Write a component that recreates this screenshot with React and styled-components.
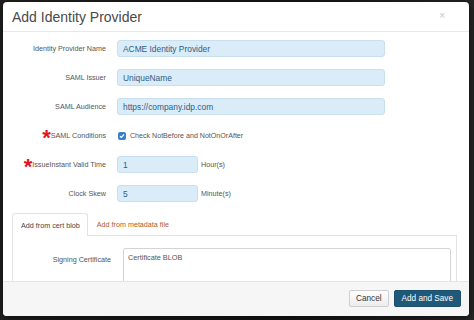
import React from "react";
import styled, { createGlobalStyle } from "styled-components";

const GlobalStyle = createGlobalStyle`
  html, body {
    margin: 0;
    padding: 0;
    background: #1c1c1c;
    font-family: "Liberation Sans", Arial, sans-serif;
  }
`;

function App() {
  return (
    <Page>
      <GlobalStyle />
      <Modal>
        <Header>
          <Title>Add Identity Provider</Title>
          <Close>×</Close>
        </Header>
        <Body>
          <Row>
            <Label>Identity Provider Name</Label>
            <Input defaultValue="ACME Identity Provider" />
          </Row>
          <Row>
            <Label>SAML Issuer</Label>
            <Input defaultValue="UniqueName" />
          </Row>
          <Row>
            <Label>SAML Audience</Label>
            <Input defaultValue="https://company.idp.com" />
          </Row>
          <Row>
            <Label>
              <Star>*</Star>SAML Conditions
            </Label>
            <CheckLine>
              <Checkbox>
                <svg width="6" height="6" viewBox="0 0 6 6">
                  <path d="M1 3.2 L2.4 4.5 L5 1.4" fill="none" stroke="#fff" strokeWidth="1.2" />
                </svg>
              </Checkbox>
              Check NotBefore and NotOnOrAfter
            </CheckLine>
          </Row>
          <Row>
            <Label>
              <Star>*</Star>IssueInstant Valid Time
            </Label>
            <Unit>
              <Input short defaultValue="1" />
              <UnitText>Hour(s)</UnitText>
            </Unit>
          </Row>
          <Row>
            <Label>Clock Skew</Label>
            <Unit>
              <Input short defaultValue="5" />
              <UnitText>Minute(s)</UnitText>
            </Unit>
          </Row>

          <Tabs>
            <Tab active>Add from cert blob</Tab>
            <Tab>Add from metadata file</Tab>
          </Tabs>
          <Pane>
            <PaneRow>
              <PaneLabel>Signing Certificate</PaneLabel>
              <TextArea defaultValue="Certificate BLOB" />
            </PaneRow>
          </Pane>
        </Body>
        <Footer>
          <Button>Cancel</Button>
          <Button primary>Add and Save</Button>
        </Footer>
      </Modal>
    </Page>
  );
}

const Page = styled.div`
  width: 474px;
  height: 320px;
  box-sizing: border-box;
  padding: 2px 5px 4px 3px;
  background: linear-gradient(90deg, #202020, #161616 60%, #262626);
`;
const Modal = styled.div`
  height: 100%;
  background: #fff;
  border-radius: 4px;
  display: flex;
  flex-direction: column;
  overflow: hidden;
  box-shadow: 0 2px 8px rgba(0, 0, 0, 0.6);
`;
const Header = styled.div`
  height: 29px;
  flex: none;
  border-bottom: 1px solid #e8e8e8;
  display: flex;
  align-items: center;
  justify-content: space-between;
  padding: 0 24px 0 9px;
`;
const Title = styled.h4`
  margin: 0;
  font-size: 14px;
  font-weight: normal;
  color: #4a4a4a;
`;
const Close = styled.span`
  font-size: 10px;
  color: #c4c4c4;
  margin-top: -2px;
`;
const Body = styled.div`
  flex: 1;
  overflow: hidden;
  padding-top: 8px;
  display: flex;
  flex-direction: column;
  gap: 12px;
`;
const Row = styled.div`
  display: grid;
  grid-template-columns: 103px auto;
  column-gap: 11px;
  align-items: center;
  min-height: 17px;
`;
const Label = styled.label`
  text-align: right;
  font-size: 7.2px;
  color: #555;
  white-space: nowrap;
`;
const Star = styled.span`
  color: #e3141b;
  font-size: 22px;
  font-weight: bold;
  line-height: 0;
  vertical-align: -7px;
`;
const Input = styled.input`
  box-sizing: border-box;
  width: ${(p) => (p.short ? "81px" : "268px")};
  height: 17px;
  margin: 0;
  padding: 0 5px;
  border: 1px solid #c7dfee;
  border-radius: 3px;
  background: #d9ecf8;
  color: #2c5d8c;
  font-family: inherit;
  font-size: 8.4px;
  outline: none;
`;
const CheckLine = styled.div`
  display: flex;
  align-items: center;
  gap: 4px;
  font-size: 7.1px;
  color: #555;
  padding-left: 1px;
`;
const Checkbox = styled.span`
  width: 8px;
  height: 8px;
  border-radius: 2px;
  background: #3b7fc6;
  display: flex;
  align-items: center;
  justify-content: center;
`;
const Unit = styled.div`
  display: flex;
  align-items: center;
  gap: 3px;
`;
const UnitText = styled.span`
  font-size: 7.2px;
  color: #555;
`;
const Tabs = styled.div`
  display: flex;
  margin: -1px 12px 0 9px;
  border-bottom: 1px solid #e3e3e3;
  height: 22px;
`;
const Tab = styled.div`
  box-sizing: border-box;
  height: ${(p) => (p.active ? "23px" : "22px")};
  padding: 0 7px 0 8px;
  display: flex;
  align-items: center;
  font-size: 7.2px;
  color: ${(p) => (p.active ? "#444" : "#b05a2c")};
  background: ${(p) => (p.active ? "#fff" : "transparent")};
  border: 1px solid ${(p) => (p.active ? "#e3e3e3" : "transparent")};
  border-bottom: none;
  border-radius: 3px 3px 0 0;
`;
const Pane = styled.div`
  margin: -12px 12px 0 9px;
  border: 1px solid #e3e3e3;
  border-top: none;
  padding-top: 12px;
  min-height: 80px;
`;
const PaneRow = styled.div`
  display: grid;
  grid-template-columns: 98px 328px;
  column-gap: 12px;
  align-items: start;
`;
const PaneLabel = styled.label`
  text-align: right;
  font-size: 7.2px;
  color: #555;
  padding-top: 7px;
`;
const TextArea = styled.textarea`
  box-sizing: border-box;
  height: 60px;
  margin: 0;
  padding: 4px 4px;
  border: 1px solid #d4d4d4;
  border-radius: 2px;
  font-family: inherit;
  font-size: 7.3px;
  color: #555;
  resize: none;
  outline: none;
`;
const Footer = styled.div`
  height: 35px;
  flex: none;
  box-sizing: border-box;
  border-top: 1px solid #e5e5e5;
  background: #f6f6f6;
  display: flex;
  align-items: center;
  justify-content: flex-end;
  gap: 5px;
  padding: 0 8px 1px 0;
`;
const Button = styled.button`
  box-sizing: border-box;
  height: 17px;
  padding: 0 ${(p) => (p.primary ? "7px" : "6px")};
  border-radius: 2px;
  font-family: inherit;
  font-size: 8.2px;
  border: 1px solid ${(p) => (p.primary ? "#1b5070" : "#cfcfcf")};
  background: ${(p) =>
    p.primary ? "#1f5878" : "linear-gradient(#ffffff, #ececec)"};
  color: ${(p) => (p.primary ? "#fff" : "#333")};
`;

export default App;
